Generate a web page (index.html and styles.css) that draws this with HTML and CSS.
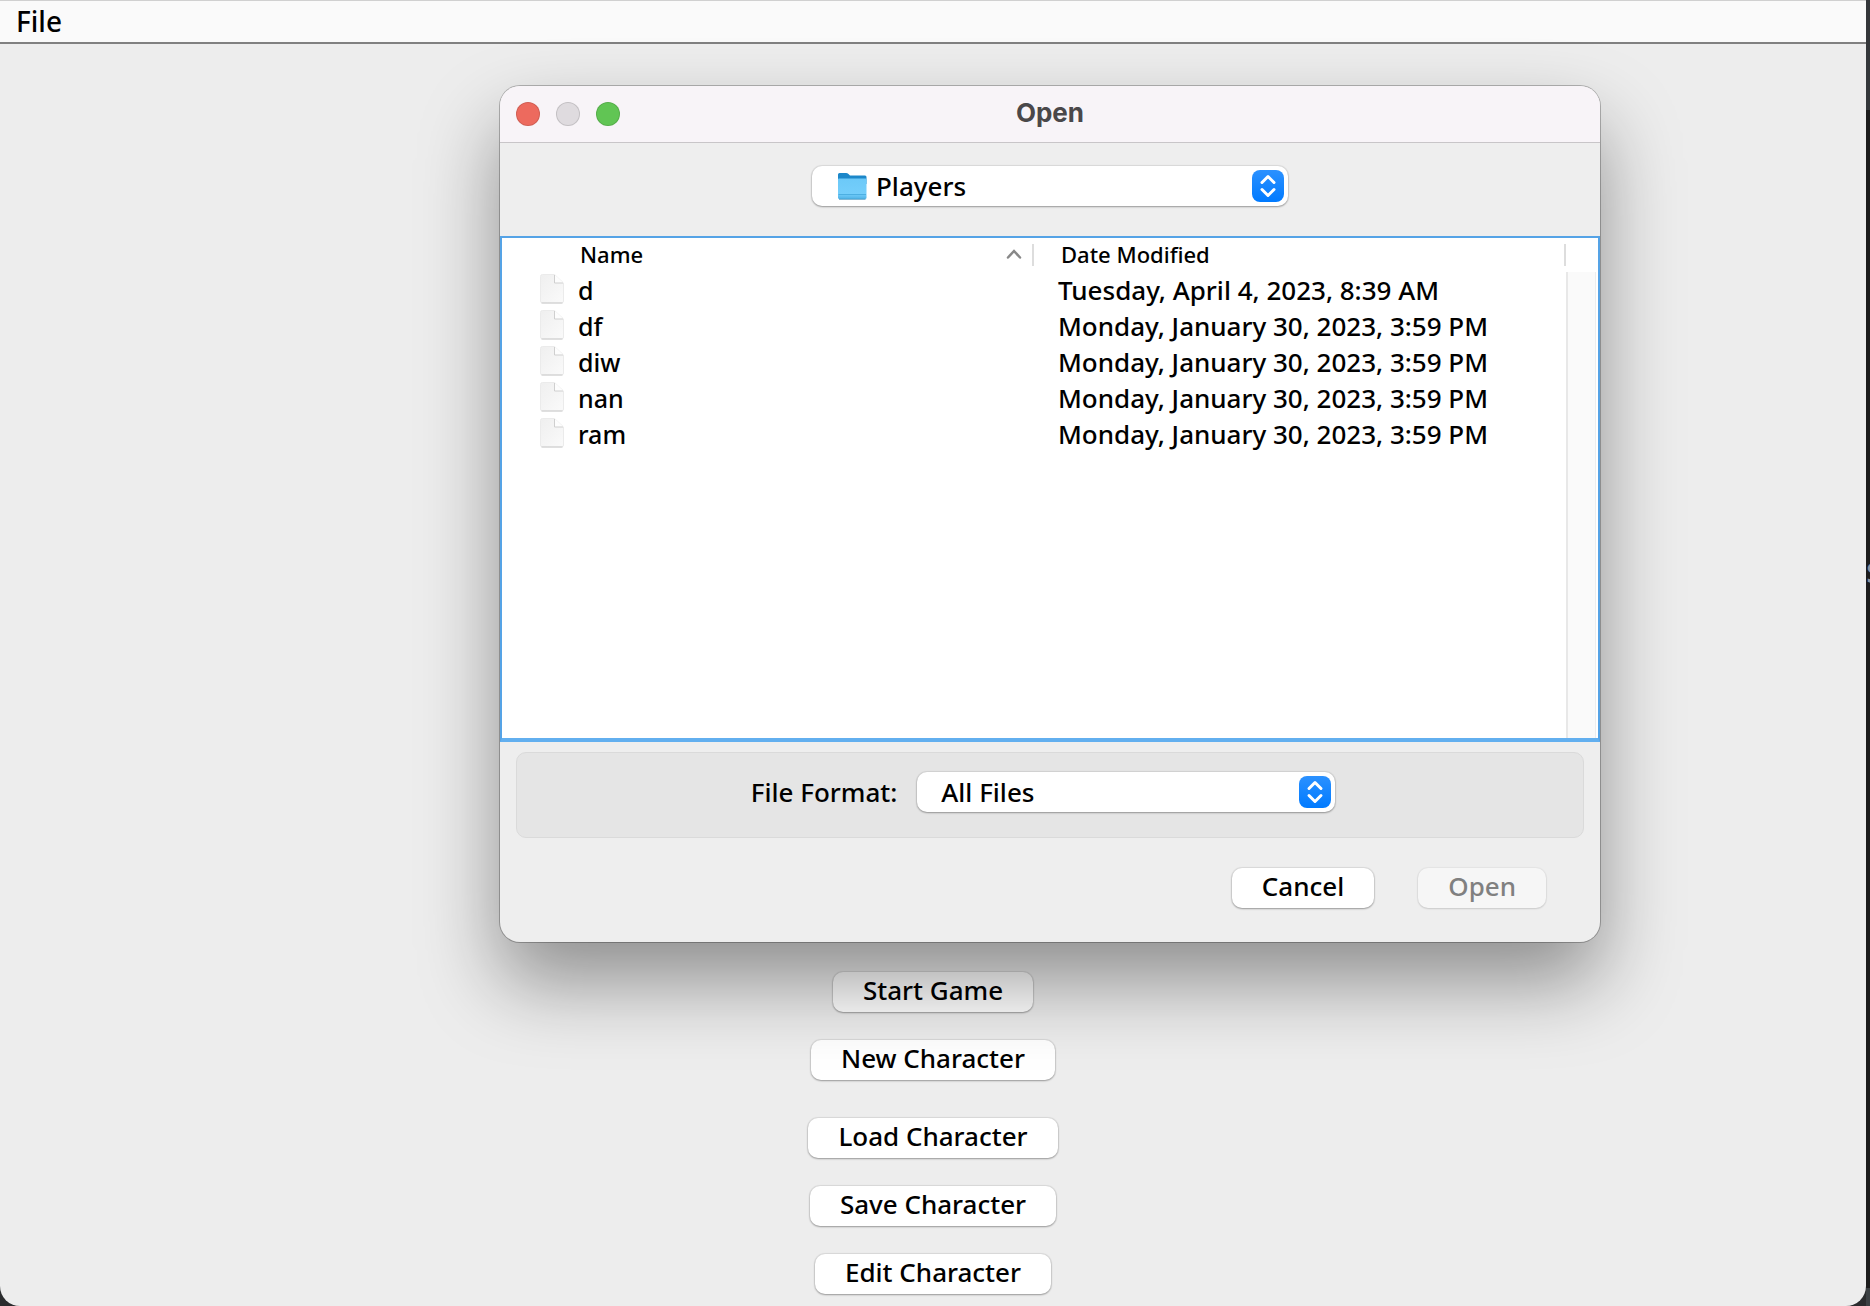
FILE: index.html
```html
<!DOCTYPE html>
<html lang="en">
<head>
  <meta charset="UTF-8">
  <title>Character Menu</title>
  <link rel="stylesheet" href="styles.css">
</head>
<body>
  <div class="desktop">
    <div class="app-window">
      <nav class="menu-bar">
        <button class="menu-item" type="button">File</button>
      </nav>

      <main class="main-menu">
        <div class="button-group">
          <button class="button" type="button">Start Game</button>
          <button class="button" type="button">New Character</button>
        </div>
        <div class="button-group">
          <button class="button" type="button">Load Character</button>
          <button class="button" type="button">Save Character</button>
          <button class="button" type="button">Edit Character</button>
        </div>
      </main>
    </div>
    <div class="backdrop">s</div>
  </div>

  <section class="dialog" role="dialog" aria-labelledby="dialog-title">
    <header class="title-bar">
      <div class="lights">
        <button class="light close" type="button" aria-label="Close"></button>
        <button class="light minimize" type="button" aria-label="Minimize" disabled></button>
        <button class="light zoom" type="button" aria-label="Zoom"></button>
      </div>
      <h1 class="title" id="dialog-title">Open</h1>
    </header>

    <div class="location">
      <div class="dropdown folder-dropdown">
        <select aria-label="Folder">
          <option>Players</option>
        </select>
        <svg class="folder-icon" width="30" height="28" viewBox="0 0 30 28">
          <defs>
            <linearGradient id="folder-front" x1="0" y1="0" x2="0" y2="1">
              <stop offset="0" stop-color="#6cc9f8"/>
              <stop offset="0.75" stop-color="#74cefb"/>
              <stop offset="1" stop-color="#4fb2e6"/>
            </linearGradient>
          </defs>
          <path d="M1 2.500Q1 1 2.500 1H9Q10.500 1 11.500 2L13 3.500H28Q29.500 3.500 29.500 5V12H1z" fill="#1c87c9"/>
          <path d="M1 7.500Q1 6.500 2 6.500H28.500Q29.500 6.500 29.500 7.500V25.500Q29.500 27 28 27H2.500Q1 27 1 25.500z" fill="url(#folder-front)"/>
          <path d="M1.500 22.500H29" stroke="#4dafe2" stroke-width="1"/>
          <path d="M2 27.300H28.500" stroke="#3c8fbd" stroke-width="0.800"/>
        </svg>
        <svg class="stepper" width="32" height="32" viewBox="0 0 32 32">
          <defs>
            <linearGradient id="stepper-blue" x1="0" y1="0" x2="0" y2="1">
              <stop offset="0" stop-color="#2b91ff"/>
              <stop offset="1" stop-color="#007aff"/>
            </linearGradient>
          </defs>
          <rect width="32" height="32" rx="8" fill="url(#stepper-blue)"/>
          <path d="M10 12.500L16 6.500L22 12.500M10 19.500L16 25.500L22 19.500" fill="none" stroke="#fff" stroke-width="3" stroke-linecap="round" stroke-linejoin="round"/>
        </svg>
      </div>
    </div>

    <div class="file-list">
      <table class="files">
        <thead>
          <tr>
            <th>
              <div class="heading name-heading">
                Name
                <svg width="16" height="10" viewBox="0 0 16 10">
                  <path d="M2 8.500L8 2L14 8.500" fill="none" stroke="#888" stroke-width="2.500" stroke-linecap="round"/>
                </svg>
              </div>
            </th>
            <th><div class="heading">Date Modified</div></th>
          </tr>
        </thead>
        <tbody>
          <tr>
            <td><div class="file"><svg class="file-icon" width="26" height="32" viewBox="0 0 26 32"><use href="#page"/></svg>d</div></td>
            <td>Tuesday, April 4, 2023, 8:39 AM</td>
          </tr>
          <tr>
            <td><div class="file"><svg class="file-icon" width="26" height="32" viewBox="0 0 26 32"><use href="#page"/></svg>df</div></td>
            <td>Monday, January 30, 2023, 3:59 PM</td>
          </tr>
          <tr>
            <td><div class="file"><svg class="file-icon" width="26" height="32" viewBox="0 0 26 32"><use href="#page"/></svg>diw</div></td>
            <td>Monday, January 30, 2023, 3:59 PM</td>
          </tr>
          <tr>
            <td><div class="file"><svg class="file-icon" width="26" height="32" viewBox="0 0 26 32"><use href="#page"/></svg>nan</div></td>
            <td>Monday, January 30, 2023, 3:59 PM</td>
          </tr>
          <tr>
            <td><div class="file"><svg class="file-icon" width="26" height="32" viewBox="0 0 26 32"><use href="#page"/></svg>ram</div></td>
            <td>Monday, January 30, 2023, 3:59 PM</td>
          </tr>
        </tbody>
      </table>
      <div class="scroll-track"></div>
    </div>

    <div class="format-panel">
      <label for="format">File Format:</label>
      <div class="dropdown format-dropdown">
        <select id="format">
          <option>All Files</option>
        </select>
        <svg class="stepper" width="32" height="32" viewBox="0 0 32 32">
          <rect width="32" height="32" rx="8" fill="url(#stepper-blue)"/>
          <path d="M10 12.500L16 6.500L22 12.500M10 19.500L16 25.500L22 19.500" fill="none" stroke="#fff" stroke-width="3" stroke-linecap="round" stroke-linejoin="round"/>
        </svg>
      </div>
    </div>

    <footer class="actions">
      <button class="button" type="button">Cancel</button>
      <button class="button" type="button" disabled>Open</button>
    </footer>
  </section>

  <!-- blank document icon shared by the file rows -->
  <svg class="symbols" width="0" height="0">
    <defs>
      <linearGradient id="page-fill" x1="0" y1="0" x2="1" y2="1">
        <stop offset="0" stop-color="#efefef"/>
        <stop offset="1" stop-color="#fafafa"/>
      </linearGradient>
      <symbol id="page" viewBox="0 0 26 32">
        <path d="M1.500 4.500Q1.500 2.500 3.500 2.500H15.500L24.500 11V29Q24.500 31 22.500 31H3.500Q1.500 31 1.500 29z" fill="url(#page-fill)" stroke="#ebebeb" stroke-width="1"/>
        <path d="M2.500 31H23.500" stroke="#c9c9c9" stroke-width="1"/>
        <path d="M15.500 2.500L24.500 11H15.500z" fill="#fdfdfd"/>
        <path d="M15.500 3V11H24" fill="none" stroke="#cfcfcf" stroke-width="1"/>
      </symbol>
    </defs>
  </svg>
</body>
</html>
```
FILE: styles.css
```css
* {
  box-sizing: border-box;
}

body {
  margin: 0;
  font-family: "Lucida Grande", "Noto Sans", sans-serif;
  font-size: 26px;
  font-weight: 500;
  color: #000;
}

button,
select {
  font: inherit;
  color: inherit;
}

.desktop {
  display: flex;
  min-height: 100vh;
  background: #2b2c2e;
}

/* sliver of the window behind */
.backdrop {
  width: 4px;
  padding-top: 552px;
  overflow: hidden;
  background: linear-gradient(to bottom, #34373a 0, #34373a 110px, #1c1c1c 110px, #1c1c1c calc(100% - 18px), #3c4043 calc(100% - 18px));
  color: #8a93a3;
  font-size: 36px;
  line-height: 36px;
}

.app-window {
  flex: 1;
  display: flex;
  flex-direction: column;
  background: #ededed;
  border-radius: 0 0 20px 20px;
}

.menu-bar {
  height: 44px;
  padding: 0 16px;
  background: #fafafa;
  border-top: 1px solid #d0d0d0;
  border-bottom: 2px solid #808080;
}

.menu-item {
  padding: 0;
  border: none;
  background: none;
  font-size: 28px;
  line-height: 40px;
}

.main-menu {
  flex: 1;
  display: flex;
  flex-direction: column;
  justify-content: flex-end;
  gap: 38px;
  padding-bottom: 12px;
}

.button-group {
  display: flex;
  flex-direction: column;
  align-items: center;
  gap: 28px;
}

.button {
  height: 40px;
  padding: 0 30px 4px;
  border: none;
  border-radius: 10px;
  background: #fff;
  line-height: 36px;
  box-shadow: 0 0 1px 1px rgba(0,0,0,0.08), 0 1px 2px rgba(0,0,0,0.3);
}

.button:disabled {
  background: #f6f6f6;
  color: #808080;
  box-shadow: 0 0 1px 1px rgba(0,0,0,0.04), 0 1px 2px rgba(0,0,0,0.12);
}

/* open dialog */
.dialog {
  position: absolute;
  top: 86px;
  left: 500px;
  width: 1100px;
  background: #eee;
  border-radius: 20px;
  overflow: hidden;
  box-shadow: 0 0 0 1px rgba(0,0,0,0.25), 0 40px 80px rgba(0,0,0,0.4);
}

.title-bar {
  display: grid;
  grid-template-columns: 1fr auto 1fr;
  align-items: center;
  height: 57px;
  padding: 0 16px;
  background: #f8f4f8;
  border-bottom: 1px solid #c8c5c8;
}

.lights {
  display: flex;
  gap: 16px;
}

.light {
  width: 24px;
  height: 24px;
  padding: 0;
  border: 1px solid rgba(0,0,0,0.12);
  border-radius: 50%;
}

.close {
  background: #ed6a5e;
}

.minimize {
  background: #dfdbdf;
}

.zoom {
  background: #61c554;
}

.title {
  margin: 0;
  padding-bottom: 2px;
  font-family: Inter, sans-serif;
  font-size: 26px;
  font-weight: 700;
  line-height: 32px;
  color: #4a484a;
}

.location {
  display: flex;
  justify-content: center;
  padding: 23px 0 30px;
}

/* the select and its icons share one grid cell */
.dropdown {
  display: grid;
  align-items: center;
  height: 40px;
}

.dropdown > * {
  grid-area: 1 / 1;
}

.dropdown select {
  appearance: none;
  width: 100%;
  height: 40px;
  padding: 0 44px 0 24px;
  border: none;
  border-radius: 10px;
  background: #fff;
  line-height: 38px;
  box-shadow: 0 0 1px 1px rgba(0,0,0,0.08), 0 1px 2px rgba(0,0,0,0.3);
}

.folder-dropdown {
  width: 476px;
}

.folder-dropdown select {
  padding-left: 64px;
}

.format-dropdown {
  width: 418px;
}

.folder-icon {
  margin-left: 25px;
  pointer-events: none;
}

.stepper {
  justify-self: end;
  margin-right: 4px;
  pointer-events: none;
}

.file-list {
  display: grid;
  grid-template-columns: 1fr 30px;
  min-height: 506px;
  padding-right: 2px;
  background: #fff;
  border: 2px solid #55a3e6;
  border-bottom: 4px solid #62afef;
}

.files {
  width: 100%;
  align-self: start;
  table-layout: fixed;
  border-collapse: collapse;
}

.files th {
  height: 34px;
  padding: 0;
  font-size: 22px;
  font-weight: 500;
  text-align: left;
}

.heading {
  height: 22px;
  padding-left: 27px;
  border-right: 2px solid #ddd;
  line-height: 20px;
}

.name-heading {
  display: flex;
  justify-content: space-between;
  align-items: center;
  padding: 0 10px 2px 78px;
}

.files td {
  height: 36px;
  padding: 0 0 0 24px;
  line-height: 36px;
}

.files td:first-child {
  padding-left: 37px;
  font-size: 25px;
}

.file {
  display: flex;
  align-items: center;
  gap: 13px;
  height: 36px;
}

.file-icon {
  align-self: flex-start;
}

.scroll-track {
  margin-top: 34px;
  background: #fafafa;
  border-left: 2px solid #e8e8e8;
  border-right: 1px solid #ededed;
}

.format-panel {
  display: flex;
  align-items: center;
  justify-content: center;
  gap: 20px;
  margin: 10px 16px 0;
  padding: 19px 14px 25px 0;
  background: #e5e5e5;
  border: 1px solid #dadada;
  border-radius: 10px;
}

.actions {
  display: flex;
  justify-content: flex-end;
  gap: 44px;
  padding: 30px 54px 34px;
}
```
